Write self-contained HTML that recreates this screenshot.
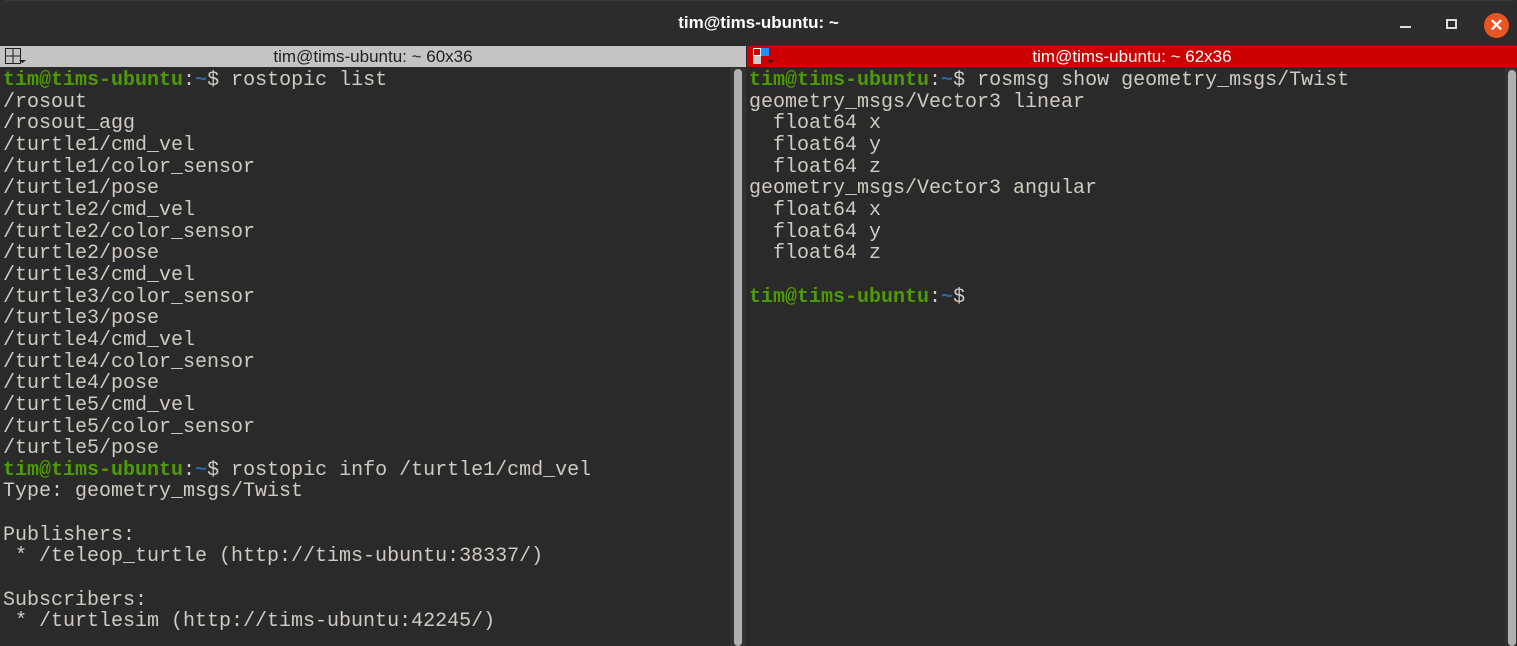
<!DOCTYPE html>
<html><head><meta charset="utf-8"><style>
*{margin:0;padding:0;box-sizing:border-box}
body{width:1517px;height:646px;background:#2b2b2b;overflow:hidden;position:relative;font-family:"Liberation Sans",sans-serif}
#title{position:absolute;left:0;top:0;width:1517px;height:46px;background:#2c2c2c;border-top:1px solid #3a3a3a;border-radius:8px 8px 0 0}
#title .t{position:absolute;left:0;right:0;top:12px;text-align:center;color:#fff;font-weight:bold;font-size:17px}
.min{position:absolute;left:1400px;top:25px;width:11px;height:2px;background:#ddd}
.max{position:absolute;left:1446px;top:18px;width:11px;height:10px;border:2px solid #ddd}
.cls{position:absolute;left:1484px;top:12px;width:25px;height:25px;border-radius:50%;background:#e95420;color:#fff;font-size:17px;text-align:center;line-height:25px;font-weight:bold}
.bar{position:absolute;top:46px;height:21px;font-size:17px;text-align:center;line-height:21px}
#lb{left:0;width:746px;background:#c4c4c4;color:#222}
#rb{left:747px;width:770px;background:#cc0000;color:#fff}
.term{position:absolute;top:67px;bottom:0;background:#2a2a2a;font-family:"Liberation Mono",monospace;font-size:20px;line-height:21.65px;color:#cfcbc2;white-space:pre;padding-top:3px}
#lt{left:0;width:730px;padding-left:3px}
#rt{left:747px;width:758px;padding-left:2px}
.g{color:#4e9a06;font-weight:bold}.b{color:#3465a4;font-weight:bold}
.sb{position:absolute;top:67px;bottom:0;background:#333}
.th{position:absolute;background:#b0b0b0;border-radius:4px}
</style></head><body>
<div id="title"><div class="t">tim@tims-ubuntu: ~</div><div class="min"></div><div class="max"></div><div class="cls">✕</div></div>
<div class="bar" id="lb">tim@tims-ubuntu: ~ 60x36
<svg style="position:absolute;left:5px;top:2px" width="22" height="18"><rect x="0.5" y="0.5" width="15" height="15" fill="none" stroke="#222"/><line x1="8" y1="0" x2="8" y2="16" stroke="#222"/><line x1="0" y1="8" x2="16" y2="8" stroke="#222"/><polygon points="14,12 21,12 17.5,15" fill="#222"/></svg></div>
<div class="bar" id="rb">tim@tims-ubuntu: ~ 62x36
<svg style="position:absolute;left:6px;top:2px" width="22" height="18"><rect x="0.5" y="0.5" width="7" height="7" fill="#c00" stroke="#fff"/><rect x="8" y="0" width="8" height="8" fill="#1e90ff"/><rect x="0" y="8" width="8" height="8" fill="#ccc"/><polygon points="14,12 21,12 17.5,15" fill="#222"/></svg></div>
<div class="term" id="lt"><span class="g">tim@tims-ubuntu</span>:<span class="b">~</span>$ rostopic list
/rosout
/rosout_agg
/turtle1/cmd_vel
/turtle1/color_sensor
/turtle1/pose
/turtle2/cmd_vel
/turtle2/color_sensor
/turtle2/pose
/turtle3/cmd_vel
/turtle3/color_sensor
/turtle3/pose
/turtle4/cmd_vel
/turtle4/color_sensor
/turtle4/pose
/turtle5/cmd_vel
/turtle5/color_sensor
/turtle5/pose
<span class="g">tim@tims-ubuntu</span>:<span class="b">~</span>$ rostopic info /turtle1/cmd_vel
Type: geometry_msgs/Twist

Publishers:
 * /teleop_turtle (http://tims-ubuntu:38337/)

Subscribers:
 * /turtlesim (http://tims-ubuntu:42245/)</div>
<div class="sb" style="left:730px;width:16px"><div class="th" style="left:4px;width:8px;top:2px;bottom:0"></div></div>
<div class="term" id="rt"><span class="g">tim@tims-ubuntu</span>:<span class="b">~</span>$ rosmsg show geometry_msgs/Twist
geometry_msgs/Vector3 linear
  float64 x
  float64 y
  float64 z
geometry_msgs/Vector3 angular
  float64 x
  float64 y
  float64 z

<span class="g">tim@tims-ubuntu</span>:<span class="b">~</span>$</div>
<div class="sb" style="left:1505px;width:12px"><div class="th" style="left:3px;width:8px;top:3px;bottom:0"></div></div>
</body></html>
